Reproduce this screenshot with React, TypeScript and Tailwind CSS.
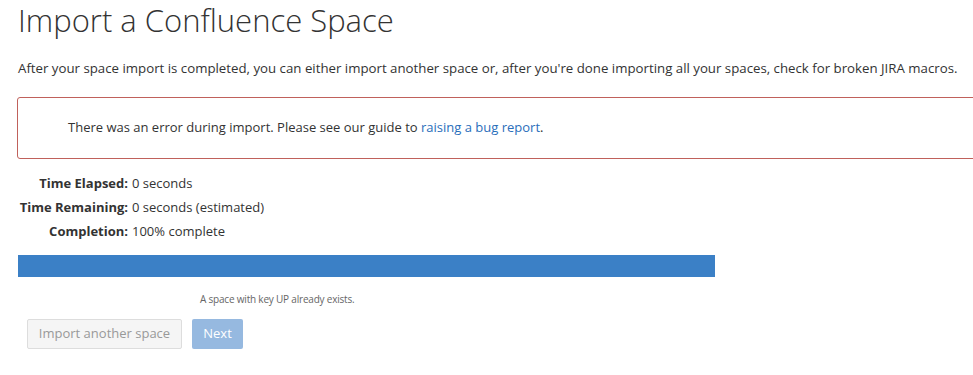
export default function App() {
  const stats = [
    { label: 'Time Elapsed:', value: '0 seconds' },
    { label: 'Time Remaining:', value: '0 seconds (estimated)' },
    { label: 'Completion:', value: '100% complete' },
  ];

  return (
    <main
      className="min-h-[375px] w-[973px] overflow-hidden bg-white text-[#333]"
      style={{ fontFamily: '"Open Sans", "Noto Sans", sans-serif' }}
    >
      <div className="pl-[18px]">
        <h1 className="pt-[1px] text-[31px] font-light leading-[38px] text-[#333]">
          Import a Confluence Space
        </h1>
        <p className="mt-[20px] whitespace-nowrap text-[13.25px] leading-[18px]">
          After your space import is completed, you can either import another space or, after you're
          done importing all your spaces, check for broken JIRA macros.
        </p>
      </div>

      <div className="ml-[17px] mt-[20px] flex h-[62px] w-[980px] items-center rounded-[3px] border border-[#c0615b] pl-[50px]">
        <p className="text-[13px]">
          There was an error during import. Please see our guide to{' '}
          <a href="#" className="text-[#2a6ebb]">
            raising a bug report
          </a>
          .
        </p>
      </div>

      <div className="mt-[15px] grid grid-cols-[128px_1fr] gap-y-[5px] text-[13px] leading-[19px]">
        {stats.map((s) => (
          <div key={s.label} className="contents">
            <span className="text-right font-bold">{s.label}</span>
            <span className="pl-[4px]">{s.value}</span>
          </div>
        ))}
      </div>

      <div className="ml-[18px] mt-[14px] h-[22px] w-[697px] bg-[#3b80c6]" />

      <p className="ml-[200px] mt-[15px] text-[10px] leading-[15px] tracking-[-0.2px] text-[#666]">
        A space with key UP already exists.
      </p>

      <div className="ml-[27px] mt-[12px] flex gap-[10px]">
        <button className="h-[30px] w-[155px] rounded-[2px] border border-[#ddd] bg-[#f5f5f5] text-[13px] text-[#999]">
          Import another space
        </button>
        <button className="h-[30px] w-[51px] rounded-[2px] bg-[#96b9e0] text-[13px] text-white">
          Next
        </button>
      </div>
    </main>
  );
}
